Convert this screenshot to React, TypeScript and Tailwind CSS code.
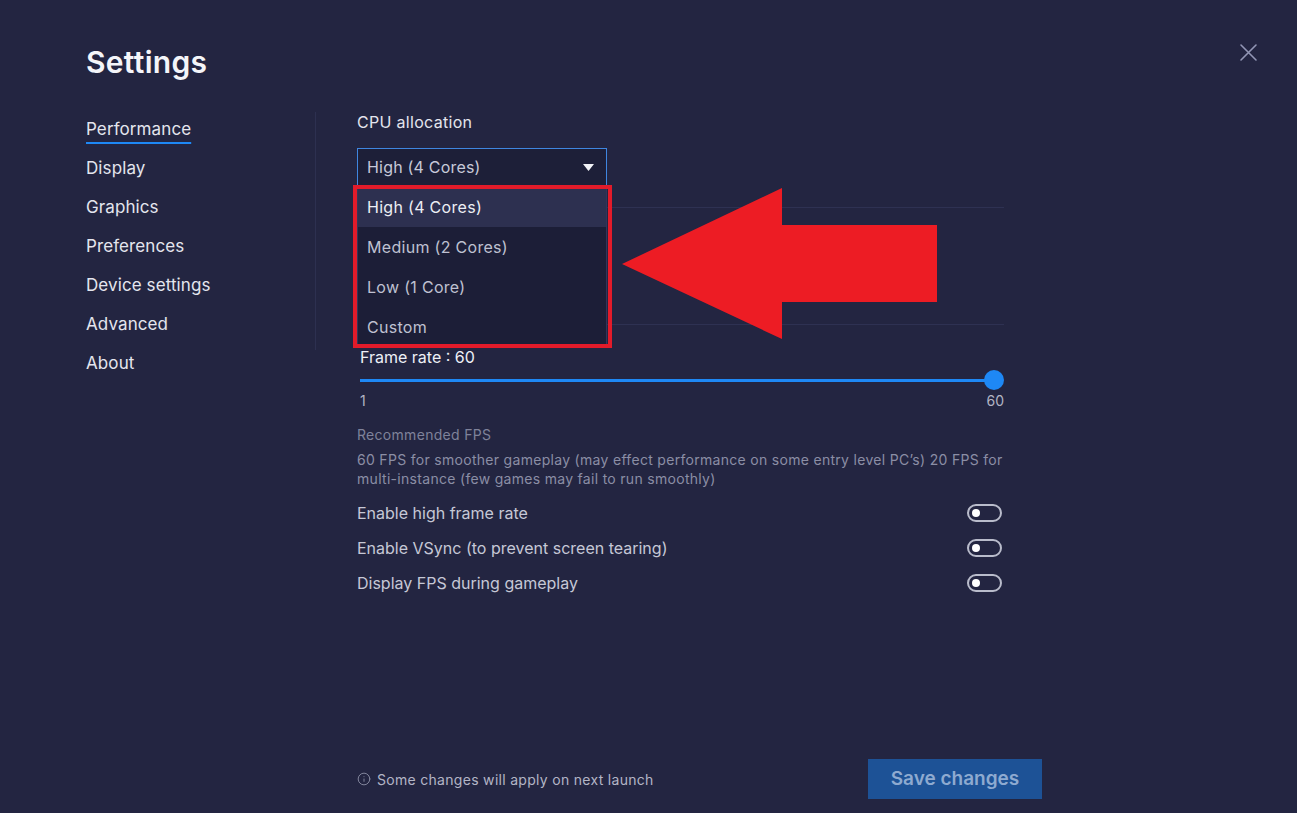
import { Info } from "lucide-react";

const navItems = [
  "Performance",
  "Display",
  "Graphics",
  "Preferences",
  "Device settings",
  "Advanced",
  "About",
];

const cpuOptions = ["High (4 Cores)", "Medium (2 Cores)", "Low (1 Core)", "Custom"];

const toggles = [
  "Enable high frame rate",
  "Enable VSync (to prevent screen tearing)",
  "Display FPS during gameplay",
];

function Toggle() {
  return (
    <div className="flex h-[18px] w-[35px] items-center rounded-full border-2 border-[#b9bccb] px-[3px]">
      <div className="h-[8px] w-[8px] rounded-full bg-white" />
    </div>
  );
}

export default function App() {
  return (
    <div
      className="relative flex h-[813px] w-full flex-col overflow-hidden bg-[#232541] pl-[86px] pr-[39px]"
      style={{ fontFamily: "Inter, 'Noto Sans', sans-serif" }}
    >
      <header className="flex items-start justify-between pt-[45px]">
        <h1 className="text-[30px] font-semibold leading-[34px] tracking-[0.3px] text-[#f4f5f9]">
          Settings
        </h1>
        <button className="-mt-[2px] text-[#9296b5]">
          <svg width="19" height="19" viewBox="0 0 19 19" fill="none">
            <path
              d="M2 2 L17 17 M17 2 L2 17"
              stroke="currentColor"
              strokeWidth="1.6"
              strokeLinecap="round"
            />
          </svg>
        </button>
      </header>

      <div className="mt-[33px] flex">
        <nav className="h-[238px] w-[230px] shrink-0 border-r border-[#2d3050] pt-[5px]">
          {navItems.map((item, i) => (
            <div
              key={item}
              className={
                "h-[39px] text-[17px] leading-[24px] tracking-[0.1px] text-[#e4e5ee] " +
                (i === 0
                  ? "underline decoration-[#1e88f5] decoration-2 underline-offset-[7px]"
                  : "")
              }
            >
              {item}
            </div>
          ))}
        </nav>

        <section className="flex w-[688px] flex-col pl-[41px]">
          <div className="text-[16px] leading-[20px] tracking-[0.3px] text-[#e4e5ee]">
            CPU allocation
          </div>

          <div className="relative mt-[16px] w-[250px]">
            <div className="flex h-[38px] items-center justify-between border border-[#3f86e0] bg-[#1d1f38] pl-[9px] pr-[12px]">
              <span className="text-[16px] tracking-[0.2px] text-[#c7c9d8]">High (4 Cores)</span>
              <svg width="11" height="7" viewBox="0 0 11 7">
                <path d="M0 0 H11 L5.5 7 Z" fill="#f2f3f7" />
              </svg>
            </div>

            <div className="absolute left-0 top-full z-10 w-full border border-[#33365a] bg-[#1c1e37]">
              {cpuOptions.map((opt, i) => (
                <div
                  key={opt}
                  className={
                    "flex h-[40px] items-center pl-[9px] text-[16px] tracking-[0.3px] " +
                    (i === 0 ? "bg-[#2d3050] text-[#eceef4]" : "text-[#bfc1d1]")
                  }
                >
                  {opt}
                </div>
              ))}
            </div>

            <div className="pointer-events-none absolute left-[-4px] top-[37px] z-20 h-[163px] w-[259px] border-4 border-[#e21b2a]" />
          </div>

          <div className="mt-[21px] h-[118px] border-y border-[#2e3152]" />

          <div className="mt-[22px] pl-[3px]">
            <div className="text-[16px] leading-[20px] text-[#eef0f6]">Frame rate : 60</div>
            <div className="mt-[3px] flex h-[20px] items-center">
              <div className="h-[3px] flex-1 bg-[#1e88f5]" />
              <div className="-ml-[10px] h-[20px] w-[20px] rounded-full bg-[#1e88f5]" />
            </div>
            <div className="mt-[2px] flex justify-between text-[14px] leading-[18px] text-[#b2b4c4]">
              <span>1</span>
              <span>60</span>
            </div>
          </div>

          <div className="mt-[16px] w-[647px] text-[14px] leading-[18px] tracking-[0.3px] text-[#7f829a]">
            Recommended FPS
          </div>
          <p className="mt-[6px] w-[647px] text-[14px] leading-[19px] tracking-[0.3px] text-[#8b8ea5]">
            60 FPS for smoother gameplay (may effect performance on some entry level PC’s) 20 FPS
            for multi-instance (few games may fail to run smoothly)
          </p>

          <div className="mt-[7px] flex w-[647px] flex-col pr-[2px]">
            {toggles.map((t) => (
              <div key={t} className="flex h-[35px] items-center justify-between">
                <span className="text-[16px] text-[#c6c8d6]">{t}</span>
                <Toggle />
              </div>
            ))}
          </div>
        </section>
      </div>

      <footer className="mb-[14px] ml-[271px] mt-auto flex w-[685px] items-center justify-between">
        <div className="flex items-center gap-[6px] text-[14px] tracking-[0.3px] text-[#b3b5c6]">
          <Info size={14} strokeWidth={1.5} className="text-[#8f92a8]" />
          <span>Some changes will apply on next launch</span>
        </div>
        <button className="h-[40px] w-[174px] bg-[#1d5296] text-[19px] font-semibold text-[#8eaad0]">
          Save changes
        </button>
      </footer>

      <svg
        className="pointer-events-none absolute left-[622px] top-[188px] z-30"
        width="316"
        height="152"
        viewBox="0 0 316 152"
      >
        <polygon
          points="0,76 160,0 160,37 315,37 315,114 160,114 160,151"
          fill="#ed1c24"
        />
      </svg>
    </div>
  );
}
